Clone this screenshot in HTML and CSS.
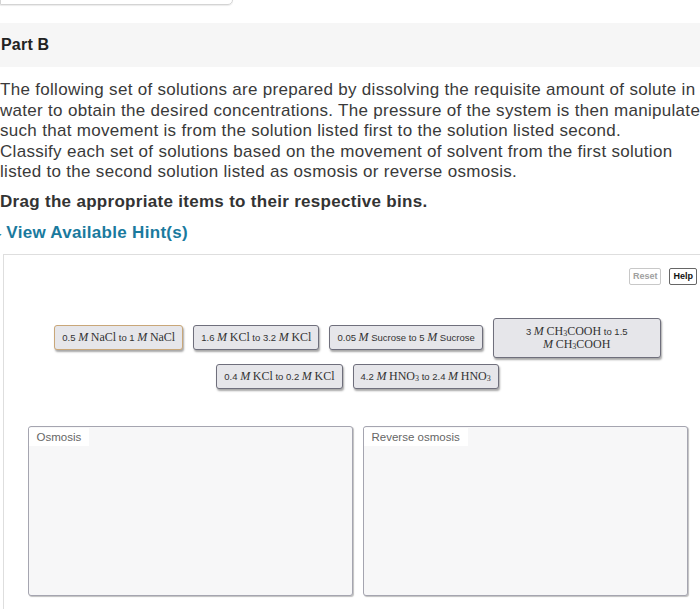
FILE: index.html
```
<!DOCTYPE html>
<html lang="en">
<head>
    <meta charset="UTF-8">
    <meta name="viewport" content="width=device-width, initial-scale=1.0">
    <title>Part B</title>
    <link rel="stylesheet" href="styles.css">
</head>
<body>
    <div class="answer-box"></div>

    <div class="part-header">Part B</div>

    <div class="prompt">
        <p class="question">The following set of solutions are prepared by dissolving the requisite amount of solute in water to obtain the desired concentrations. The pressure of the system is then manipulated such that movement is from the solution listed first to the solution listed second.<br>Classify each set of solutions based on the movement of solvent from the first solution listed to the second solution listed as osmosis or reverse osmosis.</p>
        <p class="instruction">Drag the appropriate items to their respective bins.</p>
        <a class="hint-link" href="#"><span class="hint-arrow">&#9656;</span> View Available Hint(s)</a>
    </div>

    <div class="drag-panel">
        <div class="toolbar">
            <button class="tool-btn reset">Reset</button>
            <button class="tool-btn help">Help</button>
        </div>

        <div class="chips first-row">
            <div class="chip selected">0.5 <i class="m">M</i> <span class="f">NaCl</span> to 1 <i class="m">M</i> <span class="f">NaCl</span></div>
            <div class="chip">1.6 <i class="m">M</i> <span class="f">KCl</span> to 3.2 <i class="m">M</i> <span class="f">KCl</span></div>
            <div class="chip">0.05 <i class="m">M</i> Sucrose to 5 <i class="m">M</i> Sucrose</div>
            <div class="chip wide">3 <i class="m">M</i> <span class="f">CH<sub>3</sub>COOH</span> to 1.5<br><i class="m">M</i> <span class="f">CH<sub>3</sub>COOH</span></div>
        </div>
        <div class="chips second-row">
            <div class="chip">0.4 <i class="m">M</i> <span class="f">KCl</span> to 0.2 <i class="m">M</i> <span class="f">KCl</span></div>
            <div class="chip">4.2 <i class="m">M</i> <span class="f">HNO<sub>3</sub></span> to 2.4 <i class="m">M</i> <span class="f">HNO<sub>3</sub></span></div>
        </div>

        <div class="bins">
            <div class="bin"><span class="bin-label">Osmosis</span></div>
            <div class="bin"><span class="bin-label">Reverse osmosis</span></div>
        </div>
    </div>
</body>
</html>
```

FILE: styles.css
```
body {
    margin: 0;
    font-family: "Liberation Sans", Arial, sans-serif;
    color: #333;
    background: #fff;
    overflow: hidden;
    width: 700px;
    height: 609px;
}
.answer-box {
    width: 231px;
    height: 20px;
    margin-top: -17px;
    border: 1px solid #d4d4d4;
    border-radius: 0 0 5px 0;
    box-shadow: 0 1px 1px rgba(0, 0, 0, 0.08);
}
.part-header {
    margin-top: 18px;
    height: 44px;
    width: 700px;
    background-color: #f6f6f6;
    display: flex;
    align-items: center;
    padding-left: 1px;
    font-size: 16px;
    letter-spacing: 0.2px;
    font-weight: bold;
    color: #222;
}
.prompt {
    width: 700px;
    padding-top: 13px;
    letter-spacing: 0.3px;
}
.question {
    margin: 0;
    font-size: 17px;
    line-height: 20.5px;
    color: #3a3a3a;
    width: 712px;
}
.instruction {
    margin: 9px 0 0;
    font-size: 17px;
    font-weight: bold;
    color: #333;
}
.hint-link {
    display: block;
    margin-top: 11px;
    margin-left: -5px;
    font-size: 17px;
    font-weight: bold;
    color: #1a7a9e;
    text-decoration: none;
}
.hint-arrow {
    font-size: 12px;
}
.drag-panel {
    margin-top: 11px;
    margin-left: 3px;
    width: 709px;
    height: 380px;
    border: 1px solid #dedede;
    box-sizing: border-box;
}
.toolbar {
    display: flex;
    justify-content: flex-end;
    gap: 8px;
    padding: 13px 14px 0 0;
}
.tool-btn {
    font-family: "Liberation Sans", Arial, sans-serif;
    font-size: 9px;
    font-weight: bold;
    background: #fff;
    padding: 2px 3px;
    height: 17px;
    border-radius: 2px;
    cursor: pointer;
}
.tool-btn.reset {
    border: 1px solid #c8c8c8;
    color: #a0a0a0;
}
.tool-btn.help {
    border: 1px solid #666;
    color: #111;
}
.chips {
    display: flex;
    justify-content: center;
    align-items: center;
    gap: 10px;
}
.first-row {
    margin-top: 33px;
}
.second-row {
    margin-top: 6px;
}
.chip {
    background-color: #e6e6ea;
    border: 1.5px solid #6f6f7c;
    border-radius: 3px;
    box-shadow: 1px 2px 2px rgba(0, 0, 0, 0.35);
    padding: 5px 7px;
    font-size: 9.5px;
    line-height: 12px;
    color: #333;
    white-space: nowrap;
    text-align: center;
}
.chip.selected {
    border-color: #c9a779;
}
.chip.wide {
    width: 156px;
    padding: 6px 5px;
    line-height: 12px;
}
.chip .m {
    font-family: "Liberation Serif", "Times New Roman", serif;
    font-size: 12px;
}
.chip .f {
    font-family: "Liberation Serif", "Times New Roman", serif;
    font-size: 12px;
}
.chip sub {
    font-size: 8px;
    vertical-align: -1px;
    line-height: 0;
}
.bins {
    display: flex;
    justify-content: center;
    gap: 10px;
    margin-top: 37px;
}
.bin {
    width: 325px;
    height: 170px;
    box-sizing: border-box;
    background-color: #f7f7f8;
    border: 1px solid #a5a5b0;
    border-radius: 3px;
    box-shadow: 1px 1px 1px rgba(0, 0, 0, 0.25);
}
.bin-label {
    display: inline-block;
    background: #fff;
    color: #666;
    font-size: 11.5px;
    padding: 3px 8px 3px 8px;
}
```
